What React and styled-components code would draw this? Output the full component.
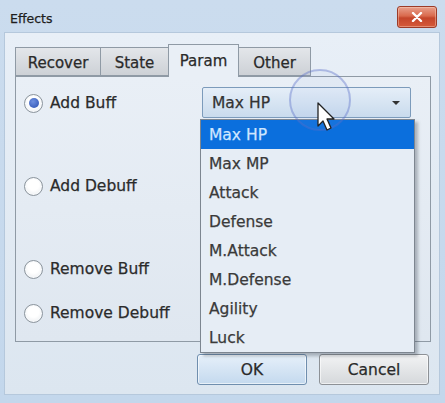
import React from 'react'
import styled, { createGlobalStyle } from 'styled-components'

const Global = createGlobalStyle`
  html, body { margin: 0; padding: 0; }
  body {
    background: #c7daee;
    font-family: "DejaVu Sans", Verdana, sans-serif;
    color: #303030;
    -webkit-text-stroke: 0.25px currentColor;
  }
`

const Window = styled.div`
  width: 445px;
  height: 403px;
  background: linear-gradient(#cbdcee, #c3d7ec);
  display: flex;
  flex-direction: column;
  overflow: hidden;
  position: relative;
`

const TitleBar = styled.div`
  height: 32px;
  display: flex;
  align-items: center;
  justify-content: space-between;
  padding: 4px 8px 0 10px;
  box-sizing: border-box;
  font-size: 12.5px;
  color: #1e1e1e;
`

const CloseButton = styled.div`
  width: 38px;
  height: 20px;
  margin-top: -2px;
  border: 1px solid #9c3b28;
  border-radius: 3px;
  background: linear-gradient(#e8a08c 0%, #d9694c 45%, #c4452a 55%, #d55a3a 100%);
  display: flex;
  align-items: center;
  justify-content: center;
  box-shadow: inset 0 0 0 1px rgba(255, 220, 200, 0.4);
`

const Client = styled.div`
  flex: 1;
  margin: 0 5px 8px 4px;
  background: linear-gradient(#e8eff7, #dce6f0);
  border: 1px solid #b5c8dc;
  padding: 11px 9px 0 10px;
  display: flex;
  flex-direction: column;
  position: relative;
`

const TabRow = styled.div`
  display: flex;
  align-items: flex-end;
  height: 32px;
  position: relative;
  z-index: 1;
`

const Tab = styled.div`
  width: ${p => p.$w}px;
  height: ${p => (p.$active ? 33 : 29)}px;
  display: flex;
  align-items: center;
  justify-content: center;
  box-sizing: border-box;
  font-size: 15px;
  border: 1px solid #8f9aa5;
  border-bottom: ${p => (p.$active ? 'none' : '1px solid #8f9aa5')};
  margin-left: -1px;
  margin-bottom: ${p => (p.$active ? -1 : 0)}px;
  background: ${p =>
    p.$active ? '#e9eff6' : 'linear-gradient(#e3e6ea, #cdd1d6)'};
  color: #2a2a2a;
  padding-top: ${p => (p.$active ? 0 : 2)}px;
  &:first-child { margin-left: 0; }
`

const Panel = styled.div`
  height: 266px;
  width: 416px;
  box-sizing: border-box;
  border: 1px solid #8f9aa5;
  background: linear-gradient(#e9eff6, #dfe7f0);
  display: grid;
  grid-template-columns: 176px 1fr;
  padding: 15px 0 0 8px;
`

const Options = styled.div`
  display: flex;
  flex-direction: column;
`

const RadioRow = styled.label`
  display: flex;
  align-items: center;
  gap: 7px;
  height: 22px;
  margin-top: ${p => p.$gap}px;
  font-size: 15.5px;
  color: #2b2b2b;
`

const RadioCircle = styled.span`
  width: 19px;
  height: 19px;
  border-radius: 50%;
  box-sizing: border-box;
  border: 1px solid #8b949c;
  background: radial-gradient(circle at 50% 40%, #ffffff 40%, #e4e8ec 100%);
  display: flex;
  align-items: center;
  justify-content: center;
  box-shadow: inset 0 0 0 1px #f7f9fb;
  &::after {
    content: '';
    width: 10px;
    height: 10px;
    border-radius: 50%;
    display: ${p => (p.$checked ? 'block' : 'none')};
    background: radial-gradient(circle at 40% 35%, #6d8fe0, #2a4fb0);
  }
`

const ComboWrap = styled.div`
  position: relative;
`

const Combo = styled.div`
  width: 209px;
  height: 31px;
  margin-top: -5px;
  margin-left: 2px;
  box-sizing: border-box;
  border: 1px solid #7c9bbb;
  border-radius: 2px;
  background: linear-gradient(#e5eef8, #c9dbed);
  display: flex;
  align-items: center;
  justify-content: space-between;
  padding: 0 10px 0 9px;
  font-size: 15.5px;
  color: #333;
`

const Arrow = styled.span`
  width: 0;
  height: 0;
  border-left: 4px solid transparent;
  border-right: 4px solid transparent;
  border-top: 4px solid #333;
`

const List = styled.ul`
  position: absolute;
  top: 27px;
  left: 0;
  width: 215px;
  margin: 0;
  padding: 0;
  list-style: none;
  box-sizing: border-box;
  border: 1px solid #7d8690;
  background: #e6edf5;
  box-shadow: 3px 3px 3px rgba(60, 70, 80, 0.35);
  z-index: 5;
`

const Item = styled.li`
  height: 29px;
  display: flex;
  align-items: center;
  padding-left: 8px;
  font-size: 15.5px;
  background: ${p => (p.$selected ? '#0b6fdd' : 'transparent')};
  color: ${p => (p.$selected ? '#cfe6ff' : '#3a3a3a')};
`

const Footer = styled.div`
  display: flex;
  justify-content: flex-end;
  gap: 12px;
  padding: 12px 1px 0 0;
`

const Button = styled.div`
  width: 110px;
  height: 31px;
  box-sizing: border-box;
  border-radius: 3px;
  border: 1px solid ${p => (p.$primary ? '#6f8eae' : '#8d9196')};
  background: ${p =>
    p.$primary
      ? 'linear-gradient(#e6f0fa, #c4d9ee)'
      : 'linear-gradient(#f2f3f4, #d5d8db)'};
  display: flex;
  align-items: center;
  justify-content: center;
  font-size: 15.5px;
  color: #2a2a2a;
  box-shadow: inset 0 0 0 1px rgba(255, 255, 255, 0.6);
`

const Pointer = styled.svg`
  position: absolute;
  left: 284px;
  top: 62px;
  z-index: 10;
  pointer-events: none;
`

const options = ['Max HP', 'Max MP', 'Attack', 'Defense', 'M.Attack', 'M.Defense', 'Agility', 'Luck']
const radios = [
  { label: 'Add Buff', gap: 0, checked: true },
  { label: 'Add Debuff', gap: 61 },
  { label: 'Remove Buff', gap: 61 },
  { label: 'Remove Debuff', gap: 22 },
]
const tabs = [
  { label: 'Recover', w: 86 },
  { label: 'State', w: 69 },
  { label: 'Param', w: 71, active: true },
  { label: 'Other', w: 73 },
]

export default function App() {
  return (
    <Window>
      <Global />
      <TitleBar>
        <span>Effects</span>
        <CloseButton>
          <svg width="12" height="10" viewBox="0 0 12 10">
            <path d="M2 1 L10 9 M10 1 L2 9" stroke="#fff" strokeWidth="2.4" strokeLinecap="round" />
          </svg>
        </CloseButton>
      </TitleBar>
      <Client>
        <TabRow>
          {tabs.map(t => (
            <Tab key={t.label} $w={t.w} $active={t.active}>{t.label}</Tab>
          ))}
        </TabRow>
        <Panel>
          <Options>
            {radios.map(r => (
              <RadioRow key={r.label} $gap={r.gap}>
                <RadioCircle $checked={r.checked} />
                {r.label}
              </RadioRow>
            ))}
          </Options>
          <ComboWrap>
            <Combo>
              <span>Max HP</span>
              <Arrow />
            </Combo>
            <List>
              {options.map((o, i) => (
                <Item key={o} $selected={i === 0}>{o}</Item>
              ))}
            </List>
          </ComboWrap>
        </Panel>
        <Footer>
          <Button $primary>OK</Button>
          <Button>Cancel</Button>
        </Footer>
      </Client>
      <Pointer width="70" height="76" viewBox="0 0 70 76">
        <circle cx="36" cy="38" r="30" fill="rgba(140,165,225,0.08)" stroke="rgba(90,110,200,0.4)" strokeWidth="2" />
        <path
          d="M34 41 L34 64 L39 59 L43 68 L47 66 L43 57 L50 57 Z"
          fill="#fff"
          stroke="#222"
          strokeWidth="1.3"
          strokeLinejoin="round"
        />
      </Pointer>
    </Window>
  )
}
